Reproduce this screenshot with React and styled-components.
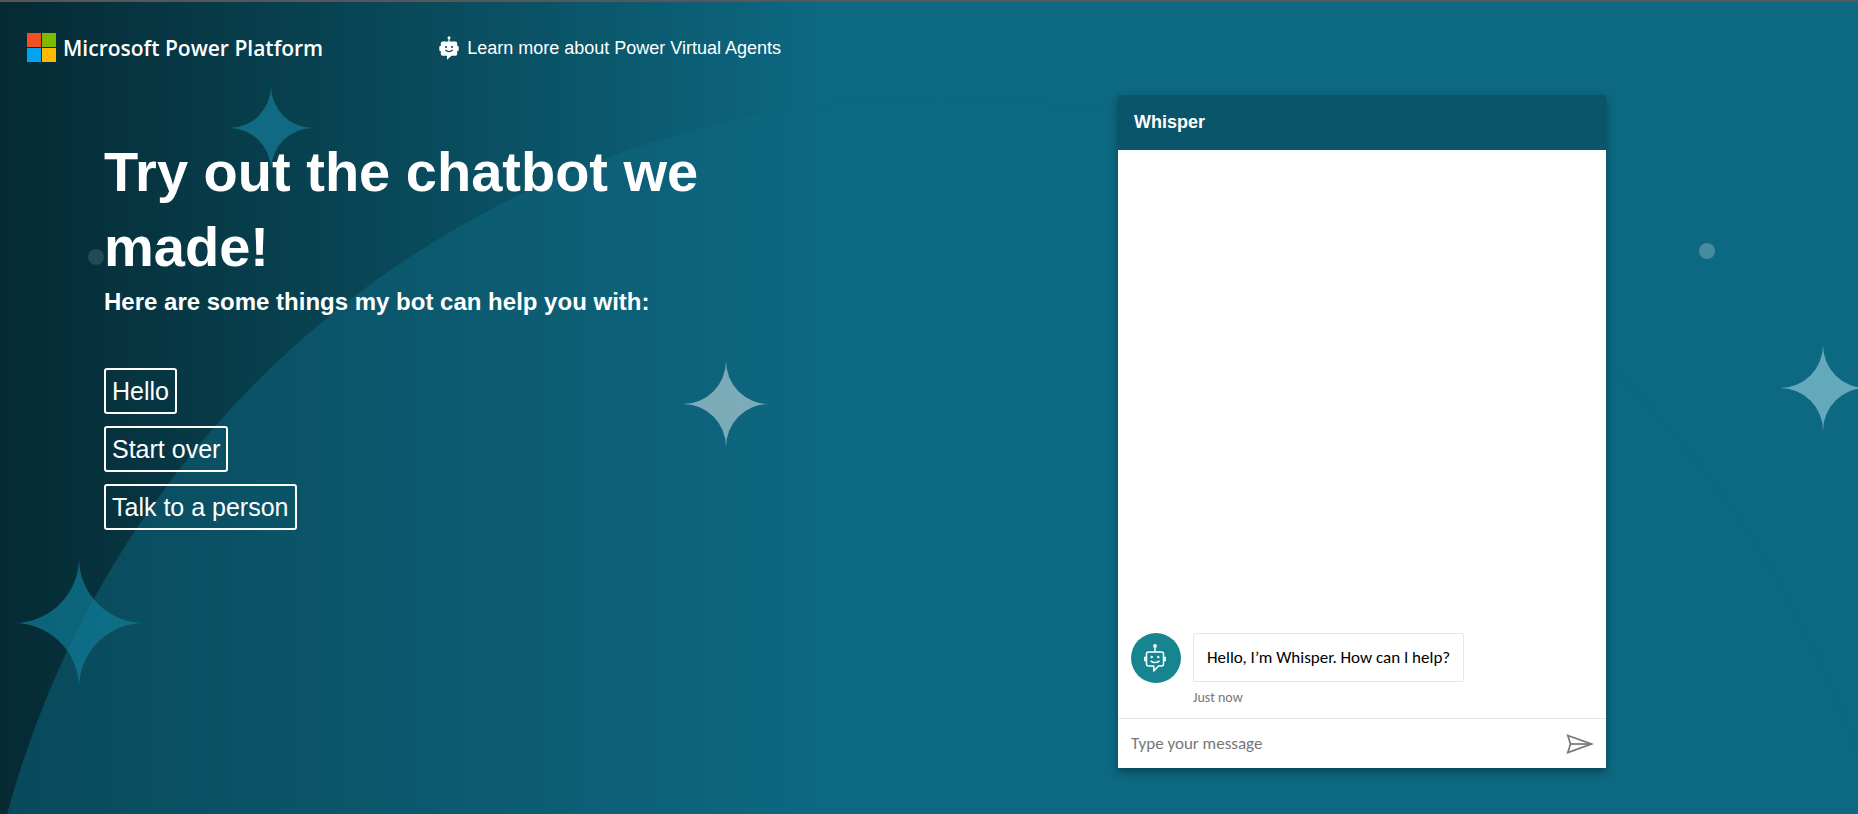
import React from "react";
import styled, { createGlobalStyle } from "styled-components";

const GlobalStyle = createGlobalStyle`
  * {
    box-sizing: border-box;
  }

  body {
    margin: 0;
    font-family: "Liberation Sans", Arial, sans-serif;
    background-color: #0d6881;
    color: #ffffff;
  }

  h1,
  h2,
  p,
  ul {
    margin: 0;
    padding: 0;
  }
`;

const Page = styled("div")`
  position: relative;
  display: flex;
  flex-direction: column;
  min-height: 100vh;
  overflow: hidden;
  border-top: 2px solid #55575b;
  background: linear-gradient(to right, #052a33 0, #0d6881 44%);
`;

const Backdrop = styled("svg")`
  position: absolute;
  inset: 0;
  width: 100%;
  height: 100%;
`;

const Header = styled("header")`
  position: relative;
  display: flex;
  align-items: center;
  gap: 116px;
  height: 93px;
  padding: 0 27px 2px;
`;

const Brand = styled("div")`
  display: flex;
  align-items: center;
  gap: 7px;
  font-family: "Open Sans", "Noto Sans", sans-serif;
  font-size: 21px;
  font-weight: 600;
  line-height: 30px;
`;

const LearnLink = styled("a")`
  display: flex;
  align-items: center;
  gap: 8px;
  font-size: 18px;
  line-height: 24px;
  color: #ffffff;
  text-decoration: none;
`;

const Main = styled("main")`
  position: relative;
  display: flex;
  flex: 1;
  justify-content: space-between;
  gap: 32px;
  padding: 0 252px 46px 104px;
`;

const Intro = styled("section")`
  max-width: 640px;
  padding-top: 39px;
`;

const Title = styled("h1")`
  font-size: 56px;
  line-height: 75px;
`;

const Subtitle = styled("h2")`
  font-size: 24px;
  line-height: 36px;
`;

const TopicList = styled("ul")`
  display: flex;
  flex-direction: column;
  align-items: flex-start;
  gap: 12px;
  margin-top: 48px;
  list-style: none;
`;

const TopicButton = styled("button")`
  display: block;
  height: 46px;
  padding: 0 6px;
  border: 2px solid #ffffff;
  border-radius: 3px;
  background: transparent;
  color: #ffffff;
  font-family: inherit;
  font-size: 25px;
  line-height: 42px;
`;

const Chat = styled("section")`
  display: flex;
  flex-direction: column;
  flex: 0 0 488px;
  background-color: #ffffff;
  box-shadow: 0 4px 8px rgba(0, 0, 0, 0.35);
  font-family: Carlito, Lato, sans-serif;
`;

const ChatHeader = styled("h2")`
  padding: 0 16px;
  background-color: #0b556a;
  font-family: "Liberation Sans", Arial, sans-serif;
  font-size: 18px;
  line-height: 55px;
`;

const Transcript = styled("div")`
  display: flex;
  flex: 1;
  align-items: flex-end;
  gap: 12px;
  padding: 0 13px 11px;
`;

const Avatar = styled("div")`
  display: flex;
  align-items: center;
  justify-content: center;
  width: 50px;
  height: 50px;
  margin-bottom: 24px;
  border-radius: 50%;
  background-color: #16858f;
`;

const Message = styled("div")`
  display: flex;
  flex-direction: column;
  gap: 6px;
`;

const Bubble = styled("p")`
  padding: 0 13px;
  border: 1px solid #e6e6e6;
  border-radius: 2px;
  color: #000000;
  font-size: 17px;
  line-height: 47px;
`;

const Time = styled("p")`
  color: #767676;
  font-size: 14px;
  line-height: 19px;
`;

const SendBox = styled("form")`
  display: flex;
  align-items: center;
  height: 50px;
  padding: 0 12px 0 13px;
  border-top: 1px solid #e6e6e6;
`;

const MessageInput = styled("input")`
  flex: 1;
  min-width: 0;
  height: 40px;
  padding: 0;
  border: 0;
  outline: 0;
  background: transparent;
  font-family: inherit;
  font-size: 17px;

  &::placeholder {
    color: #767676;
    opacity: 1;
  }
`;

const SendButton = styled("button")`
  display: flex;
  padding: 0;
  border: 0;
  background: transparent;
`;

const topics = ["Hello", "Start over", "Talk to a person"];

// four-pointed sparkle around a centre point
const Sparkle = ({ x, y, size, ...rest }) => (
  <path
    transform={`translate(${x} ${y}) scale(${size})`}
    d="M0-1A1 1 0 0 0 1 0A1 1 0 0 0 0 1A1 1 0 0 0-1 0A1 1 0 0 0 0-1Z"
    {...rest}
  />
);

const MicrosoftLogo = () => (
  <svg width="29" height="29" viewBox="0 0 29 29" aria-hidden="true">
    <path fill="#f25022" d="M0 0h14v14H0z" />
    <path fill="#7fba00" d="M15 0h14v14H15z" />
    <path fill="#00a4ef" d="M0 15h14v14H0z" />
    <path fill="#ffb900" d="M15 15h14v14H15z" />
  </svg>
);

const BotIcon = () => (
  <svg width="20" height="24" viewBox="0 0 20 24" aria-hidden="true">
    <circle cx="10" cy="1.800" r="1.500" fill="#fff" />
    <path d="M10 2v4" stroke="#fff" strokeWidth="1.200" />
    <path
      fill="#fff"
      d="M3.500 5.500h13q1.700 0 1.700 1.700V10h.5q1 0 1 1v3q0 1-1 1h-.5v3q0 1.700-1.700 1.700H12.500L8 23.800V19.700H3.500q-1.700 0-1.700-1.700v-3h-.5q-1 0-1-1v-3q0-1 1-1h.5V7.200q0-1.700 1.700-1.700z"
    />
    <circle cx="7" cy="11" r="1.100" fill="#0b5063" />
    <circle cx="13" cy="11" r="1.100" fill="#0b5063" />
    <path d="M6.300 14q3.700 3.200 7.400 0" fill="none" stroke="#0b5063" strokeWidth="1.300" />
  </svg>
);

const AvatarIcon = () => (
  <svg width="26" height="28" viewBox="0 0 26 28" fill="none" stroke="#fff" aria-hidden="true">
    <circle cx="12" cy="1.900" r="1.900" fill="#fff" stroke="none" />
    <path d="M12 3v5" strokeWidth="1.400" />
    <path
      strokeWidth="1.500"
      strokeLinejoin="round"
      d="M5.500 8h13q2 0 2 2v10q0 2-2 2h-3L10.800 27v-5H5.500q-2 0-2-2V10q0-2 2-2z"
    />
    <path d="M1.800 12.800v4.400M22.200 12.800v4.400M1.800 13.500h2M1.800 16.500h2M20.500 13.500h2M20.500 16.500h2" strokeWidth="1.400" />
    <circle cx="8.700" cy="13" r="1.200" fill="#fff" stroke="none" />
    <circle cx="15.300" cy="13" r="1.200" fill="#fff" stroke="none" />
    <path d="M7.500 16.800q4.500 3.600 9 0" strokeWidth="1.500" />
  </svg>
);

const SendIcon = () => (
  <svg width="28" height="20" viewBox="0 0 28 20" fill="none" stroke="#767676" aria-hidden="true">
    <path d="M1.800 1.500L25.500 10L1.800 18.500L4.500 10z" strokeWidth="1.700" />
    <path d="M4.500 10H25.500" strokeWidth="1.700" />
  </svg>
);

const App = () => {
  return (
    <Page>
      <GlobalStyle />
      <Backdrop viewBox="0 2 1858 812" preserveAspectRatio="xMinYMin slice" aria-hidden="true">
        <circle cx="941" cy="1065" r="967" fill="#0d6881" fillOpacity="0.5" />
        <Sparkle x={271} y={128} size={42} fill="#0f6a82" />
        <Sparkle x={79} y={623} size={65} fill="#107c97" fillOpacity="0.7" />
        <Sparkle x={726} y={404} size={43} fill="#ffffff" fillOpacity="0.46" />
        <Sparkle x={1823} y={388} size={43} fill="#63a9bb" />
        <circle cx="96" cy="257" r="8" fill="#ffffff" fillOpacity="0.12" />
        <circle cx="1707" cy="251" r="8" fill="#ffffff" fillOpacity="0.24" />
      </Backdrop>
      <Header>
        <Brand>
          <MicrosoftLogo />
          <span>Microsoft Power Platform</span>
        </Brand>
        <LearnLink href="#">
          <BotIcon />
          <span>Learn more about Power Virtual Agents</span>
        </LearnLink>
      </Header>
      <Main>
        <Intro>
          <Title>Try out the chatbot we made!</Title>
          <Subtitle>Here are some things my bot can help you with:</Subtitle>
          <TopicList>
            {topics.map((topic) => (
              <li key={topic}>
                <TopicButton type="button">{topic}</TopicButton>
              </li>
            ))}
          </TopicList>
        </Intro>
        <Chat>
          <ChatHeader>Whisper</ChatHeader>
          <Transcript>
            <Avatar>
              <AvatarIcon />
            </Avatar>
            <Message>
              <Bubble>Hello, I’m Whisper. How can I help?</Bubble>
              <Time>Just now</Time>
            </Message>
          </Transcript>
          <SendBox onSubmit={(e) => e.preventDefault()}>
            <MessageInput
              type="text"
              aria-label="Type your message"
              placeholder="Type your message"
            />
            <SendButton type="submit" aria-label="Send">
              <SendIcon />
            </SendButton>
          </SendBox>
        </Chat>
      </Main>
    </Page>
  );
};

export default App;
